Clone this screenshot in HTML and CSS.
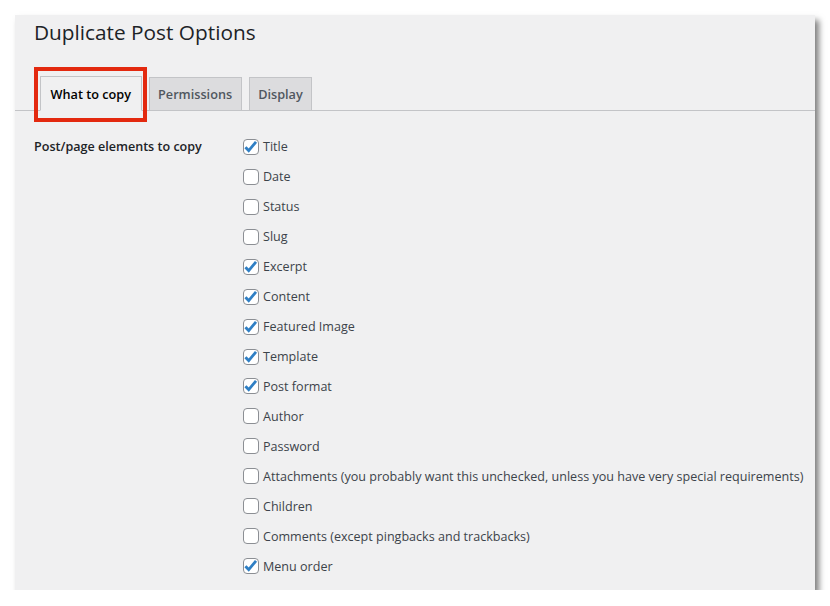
FILE: index.html
```html
<!DOCTYPE html>
<html lang="en">
<head>
<meta charset="utf-8">
<title>Duplicate Post Options</title>
<link rel="stylesheet" href="styles.css">
</head>
<body>
<div class="panel">
  <h1 class="title">Duplicate Post Options</h1>
  <nav class="tabs">
    <span class="tab tab-active">What to copy</span>
    <span class="tab">Permissions</span>
    <span class="tab">Display</span>
  </nav>
  <div class="highlight"></div>
  <div class="form-row">
    <div class="form-label">Post/page elements to copy</div>
    <div class="options">
      <label class="opt"><span class="cb checked"><svg viewBox="0 0 16 16"><path d="M2.4 8.2 L5.7 11.6 L13 2.9"/></svg></span>Title</label>
      <label class="opt"><span class="cb"></span>Date</label>
      <label class="opt"><span class="cb"></span>Status</label>
      <label class="opt"><span class="cb"></span>Slug</label>
      <label class="opt"><span class="cb checked"><svg viewBox="0 0 16 16"><path d="M2.4 8.2 L5.7 11.6 L13 2.9"/></svg></span>Excerpt</label>
      <label class="opt"><span class="cb checked"><svg viewBox="0 0 16 16"><path d="M2.4 8.2 L5.7 11.6 L13 2.9"/></svg></span>Content</label>
      <label class="opt"><span class="cb checked"><svg viewBox="0 0 16 16"><path d="M2.4 8.2 L5.7 11.6 L13 2.9"/></svg></span>Featured Image</label>
      <label class="opt"><span class="cb checked"><svg viewBox="0 0 16 16"><path d="M2.4 8.2 L5.7 11.6 L13 2.9"/></svg></span>Template</label>
      <label class="opt"><span class="cb checked"><svg viewBox="0 0 16 16"><path d="M2.4 8.2 L5.7 11.6 L13 2.9"/></svg></span>Post format</label>
      <label class="opt"><span class="cb"></span>Author</label>
      <label class="opt"><span class="cb"></span>Password</label>
      <label class="opt"><span class="cb"></span>Attachments (you probably want this unchecked, unless you have very special requirements)</label>
      <label class="opt"><span class="cb"></span>Children</label>
      <label class="opt"><span class="cb"></span>Comments (except pingbacks and trackbacks)</label>
      <label class="opt"><span class="cb checked"><svg viewBox="0 0 16 16"><path d="M2.4 8.2 L5.7 11.6 L13 2.9"/></svg></span>Menu order</label>
    </div>
  </div>
</div>
</body>
</html>
```
FILE: styles.css
```css
html, body {
  margin: 0;
  padding: 0;
  background: #ffffff;
}

body {
  font-family: "Open Sans", "Noto Sans", sans-serif;
  font-size: 12.57px;
  color: #3c434a;
}

.panel {
  position: relative;
  box-sizing: border-box;
  margin: 15px 0 0 15px;
  width: 800px;
  height: 575px;
  padding: 0 0 0 19px;
  background: #f0f0f1;
  box-shadow: 4px 5px 6px rgba(0, 0, 0, 0.5);
}

.title {
  margin: 0;
  font-size: 20.8px;
  font-weight: 400;
  line-height: 34px;
  color: #1d2327;
}

.tabs {
  display: flex;
  align-items: flex-end;
  margin: 27px 0 0 -19px;
  padding-left: 25px;
  border-bottom: 1px solid #c3c4c7;
}

.tab {
  box-sizing: border-box;
  height: 34px;
  line-height: 32px;
  margin: 0 0 -1px 7px;
  padding: 0 8.5px;
  border: 1px solid #c3c4c7;
  background: #dcdcde;
  color: #50575e;
  font-size: 12.7px;
  font-weight: 600;
}

.tab-active {
  height: 35px;
  line-height: 34px;
  margin-left: 0;
  padding: 0 9.5px;
  background: #f0f0f1;
  border-bottom-color: #f0f0f1;
  color: #000000;
}

.highlight {
  position: absolute;
  left: 19px;
  top: 52px;
  width: 113px;
  height: 55px;
  box-sizing: border-box;
  border: 4px solid #e3290f;
}

.form-row {
  display: flex;
  margin-top: 21px;
}

.form-label {
  width: 209px;
  flex: none;
  line-height: 30px;
  font-weight: 600;
  color: #1d2327;
}

.options {
  display: flex;
  flex-direction: column;
}

.opt {
  display: flex;
  align-items: center;
  height: 29.95px;
  gap: 4px;
  white-space: nowrap;
}

.cb {
  box-sizing: border-box;
  width: 16px;
  height: 16px;
  flex: none;
  border: 1px solid #8c8f94;
  border-radius: 4px;
  background: #ffffff;
  position: relative;
}

.cb svg {
  position: absolute;
  left: -1px;
  top: -1px;
  width: 16px;
  height: 16px;
  fill: none;
  stroke: #2f7fc4;
  stroke-width: 2.8;
  stroke-linecap: butt;
  stroke-linejoin: miter;
}
```
